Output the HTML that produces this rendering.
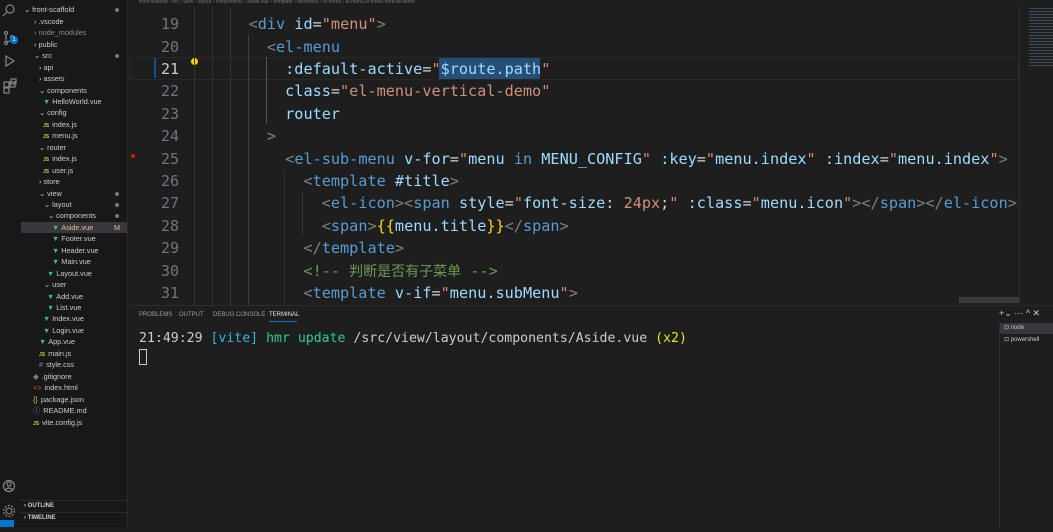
<!DOCTYPE html><html><head><style>
*{margin:0;padding:0;box-sizing:border-box}
body{width:1053px;height:527px;background:#1e1e1e;overflow:hidden;position:relative;font-family:"Liberation Sans",sans-serif}
.act{position:absolute;left:0;top:0;width:20px;height:527px;background:#181818}
.side{position:absolute;left:20px;top:0;width:108px;height:527px;background:#181818;border-right:1px solid #2b2b2b}
.row{position:absolute;font-size:7.3px;color:#cccccc;height:11px;line-height:11px;white-space:nowrap}
.dot{position:absolute;right:8px;width:4px;height:4px;border-radius:50%;background:#777}
.v{color:#41b883;font-weight:bold;margin-right:2px}
.js{color:#cbcb41;font-size:5px;font-weight:bold;margin-right:3px}
.ed{position:absolute;left:129px;top:0;width:924px;height:305px;overflow:hidden}
.ln{position:absolute;left:0;width:50px;text-align:right;font:15px "DejaVu Sans Mono",monospace;color:#6e7681;height:22.4px;line-height:22.4px}
.cl{position:absolute;left:83px;font:15.2px "DejaVu Sans Mono",monospace;white-space:pre;height:22.4px;line-height:22.4px;color:#d4d4d4}
.t{color:#569cd6}.b{color:#808080}.a{color:#9cdcfe}.s{color:#ce9178}.c{color:#6a9955}.y{color:#ffd700}
.panel{position:absolute;left:129px;top:305px;width:924px;height:222px;background:#1e1e1e;border-top:1px solid #2b2b2b}
.tab{position:absolute;top:6px;font-size:6px;color:#9d9d9d}
.term{position:absolute;left:10px;top:25px;font:13.2px "DejaVu Sans Mono",monospace;white-space:pre;color:#cccccc}
</style></head><body>
<div class="act">
<svg width="20" height="527" fill="none" stroke="#858585" stroke-width="1.2">
<circle cx="10" cy="9" r="4"/><path d="M7 12l-4 4"/>
<circle cx="6" cy="33" r="1.5"/><circle cx="6" cy="43" r="1.5"/><circle cx="12" cy="37" r="1.5"/><path d="M6 34v7M12 38q0 3-6 4"/>
<path d="M6 56l8 5-8 5z"/><path d="M4 82h5v5h-5zM10 82h5v5h-5zM4 88h5v5h-5zM11 79h5v5h-5z"/>
<circle cx="9" cy="486" r="5.5"/><circle cx="9" cy="484" r="2"/><path d="M5 490q4-4 8 0"/>
<circle cx="9" cy="511" r="3"/><circle cx="9" cy="511" r="5.5" stroke-dasharray="2 1.5"/>
</svg>
<div style="position:absolute;left:10px;top:36px;width:8px;height:8px;border-radius:50%;background:#0078d4;font-size:6px;color:#fff;text-align:center;line-height:8px">1</div>
<div style="position:absolute;left:0;top:520px;width:14px;height:7px;background:#0078d4"></div>
</div>
<div class="side">
<div class="row" style="left:4px;top:4px">⌄ front-scaffold</div><div class="dot" style="top:8px"></div>
<div class="row" style="left:14px;top:16px">› .vscode</div>
<div class="row" style="left:14px;top:27px;color:#8b8b8b">› node_modules</div>
<div class="row" style="left:14px;top:39px">› public</div>
<div class="row" style="left:14px;top:50px">⌄ src</div><div class="dot" style="top:54px"></div>
<div class="row" style="left:19px;top:62px">› api</div>
<div class="row" style="left:19px;top:73px">› assets</div>
<div class="row" style="left:19px;top:85px">⌄ components</div>
<div class="row" style="left:23px;top:96px"><span class="v">▼</span>HelloWorld.vue</div>
<div class="row" style="left:19px;top:107px">⌄ config</div>
<div class="row" style="left:23px;top:119px"><span class="js">JS</span>index.js</div>
<div class="row" style="left:23px;top:130px"><span class="js">JS</span>menu.js</div>
<div class="row" style="left:19px;top:142px">⌄ router</div>
<div class="row" style="left:23px;top:153px"><span class="js">JS</span>index.js</div>
<div class="row" style="left:23px;top:165px"><span class="js">JS</span>user.js</div>
<div class="row" style="left:19px;top:176px">› store</div>
<div class="row" style="left:19px;top:188px">⌄ view</div><div class="dot" style="top:192px"></div>
<div class="row" style="left:24px;top:199px">⌄ layout</div><div class="dot" style="top:203px"></div>
<div class="row" style="left:28px;top:210px">⌄ components</div><div class="dot" style="top:214px"></div>
<div style="position:absolute;left:1px;top:222px;width:106px;height:11px;background:#37373d"></div>
<div class="row" style="left:32px;top:222px;color:#e2c08d"><span class="v">▼</span>Aside.vue</div><div class="row" style="left:94px;top:222px;color:#e2c08d">M</div>
<div class="row" style="left:32px;top:233px"><span class="v">▼</span>Footer.vue</div>
<div class="row" style="left:32px;top:245px"><span class="v">▼</span>Header.vue</div>
<div class="row" style="left:32px;top:256px"><span class="v">▼</span>Main.vue</div>
<div class="row" style="left:27px;top:268px"><span class="v">▼</span>Layout.vue</div>
<div class="row" style="left:24px;top:279px">⌄ user</div>
<div class="row" style="left:27px;top:291px"><span class="v">▼</span>Add.vue</div>
<div class="row" style="left:27px;top:302px"><span class="v">▼</span>List.vue</div>
<div class="row" style="left:23px;top:313px"><span class="v">▼</span>Index.vue</div>
<div class="row" style="left:23px;top:325px"><span class="v">▼</span>Login.vue</div>
<div class="row" style="left:19px;top:336px"><span class="v">▼</span>App.vue</div>
<div class="row" style="left:19px;top:348px"><span class="js">JS</span>main.js</div>
<div class="row" style="left:19px;top:359px"><span style="color:#519aba;margin-right:3px">#</span>style.css</div>
<div class="row" style="left:13px;top:371px"><span style="color:#6d8086;margin-right:3px">◆</span>.gitignore</div>
<div class="row" style="left:13px;top:382px"><span style="color:#e44d26;margin-right:3px">&lt;&gt;</span>index.html</div>
<div class="row" style="left:13px;top:394px"><span style="color:#cbcb41;margin-right:3px">{}</span>package.json</div>
<div class="row" style="left:13px;top:405px"><span style="color:#519aba;margin-right:3px">ⓘ</span>README.md</div>
<div class="row" style="left:13px;top:417px"><span class="js">JS</span>vite.config.js</div>
<div style="position:absolute;left:0;top:500px;width:108px;border-top:1px solid #2b2b2b"></div>
<div class="row" style="left:4px;top:501px;font-weight:bold;font-size:6px">› OUTLINE</div>
<div style="position:absolute;left:0;top:512px;width:108px;border-top:1px solid #2b2b2b"></div>
<div class="row" style="left:4px;top:513px;font-weight:bold;font-size:6px">› TIMELINE</div>
</div>
<div class="ed">
<div style="position:absolute;left:0;top:57px;width:890px;height:23px;border:1px solid #282828"></div>
<div style="position:absolute;left:25px;top:58px;width:2px;height:20px;background:#0078d4;opacity:.6"></div>
<div style="position:absolute;left:62px;top:58px;width:7px;height:7px;border-radius:50%;background:#ffcc00"></div>
<div style="position:absolute;left:2px;top:154px;width:4px;height:4px;border-radius:50%;background:#e51400"></div>
<div style="position:absolute;left:310px;top:58px;width:101px;height:21px;background:#264f78"></div>
<div style="position:absolute;left:65px;top:0;height:305px;border-left:1px solid #333"></div>
<div style="position:absolute;left:83px;top:0;height:305px;border-left:1px solid #333"></div>
<div style="position:absolute;left:101px;top:0;height:305px;border-left:1px solid #333"></div>
<div style="position:absolute;left:119px;top:35px;height:270px;border-left:1px solid #404040"></div>
<div style="position:absolute;left:137px;top:57px;height:66px;border-left:1px solid #585858"></div>
<div style="position:absolute;left:155px;top:170px;height:135px;border-left:1px solid #333"></div>
<div style="position:absolute;left:173px;top:192px;height:45px;border-left:1px solid #333"></div>
<div style="position:absolute;left:890px;top:0;height:305px;width:1px;background:#2b2b2b"></div>
<div style="position:absolute;left:830px;top:297px;width:60px;height:6px;background:#3a3a3a"></div>
<div class="ln" style="top:-9px">18</div><div class="cl" style="top:-9px">    <span class="c">&lt;!-- "menu" --&gt;</span></div>
<div class="ln" style="top:13px">19</div><div class="cl" style="top:13px">    <span class="b">&lt;</span><span class="t">div</span> <span class="a">id</span>=<span class="s">"menu"</span><span class="b">&gt;</span></div>
<div class="ln" style="top:36px">20</div><div class="cl" style="top:36px">      <span class="b">&lt;</span><span class="t">el-menu</span></div>
<div class="ln" style="top:58px;color:#ccc">21</div><div class="cl" style="top:58px">        <span class="a">:default-active</span>=<span class="s">"</span><span class="a">$route.path</span><span class="s">"</span></div>
<div class="ln" style="top:80px">22</div><div class="cl" style="top:80px">        <span class="a">class</span>=<span class="s">"el-menu-vertical-demo"</span></div>
<div class="ln" style="top:103px">23</div><div class="cl" style="top:103px">        <span class="a">router</span></div>
<div class="ln" style="top:125px">24</div><div class="cl" style="top:125px">      <span class="b">&gt;</span></div>
<div class="ln" style="top:148px">25</div><div class="cl" style="top:148px">        <span class="b">&lt;</span><span class="t">el-sub-menu</span> <span class="a">v-for</span>=<span class="s">"</span><span class="a">menu</span> <span class="t">in</span> <span class="a">MENU_CONFIG</span><span class="s">"</span> <span class="a">:key</span>=<span class="s">"</span><span class="a">menu.index</span><span class="s">"</span> <span class="a">:index</span>=<span class="s">"</span><span class="a">menu.index</span><span class="s">"</span><span class="b">&gt;</span></div>
<div class="ln" style="top:170px">26</div><div class="cl" style="top:170px">          <span class="b">&lt;</span><span class="t">template</span> <span class="a">#title</span><span class="b">&gt;</span></div>
<div class="ln" style="top:192px">27</div><div class="cl" style="top:192px">            <span class="b">&lt;</span><span class="t">el-icon</span><span class="b">&gt;&lt;</span><span class="t">span</span> <span class="a">style</span>=<span class="s">"</span><span class="a">font-size</span>: <span class="s">24px</span>;<span class="s">"</span> <span class="a">:class</span>=<span class="s">"</span><span class="a">menu.icon</span><span class="s">"</span><span class="b">&gt;&lt;/</span><span class="t">span</span><span class="b">&gt;&lt;/</span><span class="t">el-icon</span><span class="b">&gt;</span></div>
<div class="ln" style="top:215px">28</div><div class="cl" style="top:215px">            <span class="b">&lt;</span><span class="t">span</span><span class="b">&gt;</span><span class="y">{{</span><span class="a">menu.title</span><span class="y">}}</span><span class="b">&lt;/</span><span class="t">span</span><span class="b">&gt;</span></div>
<div class="ln" style="top:237px">29</div><div class="cl" style="top:237px">          <span class="b">&lt;/</span><span class="t">template</span><span class="b">&gt;</span></div>
<div class="ln" style="top:260px">30</div><div class="cl" style="top:260px">          <span class="c">&lt;!-- <span style="font-family:'Noto Sans CJK SC',sans-serif;font-size:14px">判断是否有子菜单</span> --&gt;</span></div>
<div class="ln" style="top:282px">31</div><div class="cl" style="top:282px">          <span class="b">&lt;</span><span class="t">template</span> <span class="a">v-if</span>=<span class="s">"</span><span class="a">menu.subMenu</span><span class="s">"</span><span class="b">&gt;</span></div>
<div style="position:absolute;left:0;top:0;width:924px;height:7px;background:#1e1e1e;font-size:5px;color:#777;padding-left:10px;line-height:5px;white-space:nowrap">front-scaffold › src › view › layout › components › Aside.vue › template › div#menu › el-menu › el-menu.el-menu-vertical-demo</div>
<div style="position:absolute;left:900px;top:8px;width:24px;height:60px;opacity:.5;background:repeating-linear-gradient(#5a7a9a 0 1px,transparent 1px 3px)"></div>
</div>
<div class="panel">
<div class="tab" style="left:10px">PROBLEMS</div><div class="tab" style="left:50px">OUTPUT</div><div class="tab" style="left:84px">DEBUG CONSOLE</div><div class="tab" style="left:140px;color:#e7e7e7">TERMINAL</div>
<div style="position:absolute;left:140px;top:15px;width:28px;height:1px;background:#0078d4"></div>
<div class="term">21:49:29 <span style="color:#29b8db">[vite]</span> <span style="color:#23d18b">hmr update</span> /src/view/layout/components/Aside.vue <span style="color:#e5e510">(x2)</span></div>
<div style="position:absolute;left:10px;top:43px;width:8px;height:16px;border:1px solid #ccc"></div>
<div style="position:absolute;left:870px;top:2px;font-size:9px;color:#ccc">+⌄ ··· ^ ✕</div>
<div style="position:absolute;left:870px;top:17px;width:54px;height:205px;border-left:1px solid #2b2b2b"></div>
<div style="position:absolute;left:871px;top:17px;width:53px;height:11px;background:#37373d"></div>
<div style="position:absolute;left:875px;top:18px;font-size:6px;color:#ccc">⊡ node</div>
<div style="position:absolute;left:875px;top:30px;font-size:6px;color:#ccc">⊡ powershell</div>
</div>
</body></html>
